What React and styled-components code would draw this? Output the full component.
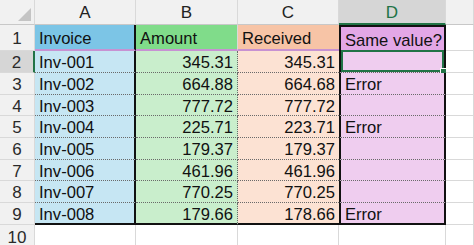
import styled, { createGlobalStyle } from "styled-components";

const GlobalStyle = createGlobalStyle`
  html, body {
    margin: 0;
    padding: 0;
    background: #ffffff;
  }
  body {
    font-family: "Liberation Sans", Arial, sans-serif;
    overflow: hidden;
  }
`;

const GRID = "#d9d9d9";
const DOT = "1px dotted #6a6a6a";
const BLACK = "2px solid #111111";
const GREEN = "#217346";

const palette = {
  A: { head: "#7cc5e6", body: "#c6e6f3" },
  B: { head: "#80dc8a", body: "#c9eecc" },
  C: { head: "#f7c4a6", body: "#fce2d3" },
  D: { head: "#e3a7e6", body: "#efcdef" },
};

const rows = [
  ["Inv-001", "345.31", "345.31", ""],
  ["Inv-002", "664.88", "664.68", "Error"],
  ["Inv-003", "777.72", "777.72", ""],
  ["Inv-004", "225.71", "223.71", "Error"],
  ["Inv-005", "179.37", "179.37", ""],
  ["Inv-006", "461.96", "461.96", ""],
  ["Inv-007", "770.25", "770.25", ""],
  ["Inv-008", "179.66", "178.66", "Error"],
];

const Sheet = styled.div`
  display: grid;
  grid-template-columns: 35px 101px 102px 101px 107px 1fr;
  grid-template-rows: 25px 26px 22px 22px 21px 22px 22px 21px 22px 22px 24px;
  width: 474px;
  height: 245px;
  overflow: hidden;
`;

const Corner = styled.div`
  position: relative;
  background: #f1f1f1;
  border-right: 1px solid ${GRID};
  border-bottom: 1px solid #c8c8c8;

  &::after {
    content: "";
    position: absolute;
    right: 3px;
    bottom: 3px;
    width: 0;
    height: 0;
    border-left: 13px solid transparent;
    border-bottom: 13px solid #c4c4c4;
  }
`;

const ColHead = styled.div`
  display: flex;
  align-items: center;
  justify-content: center;
  padding-top: 2px;
  background: ${(p) => (p.$active ? "#d6d6d6" : "#f1f1f1")};
  color: ${(p) => (p.$active ? GREEN : "#222222")};
  font-size: 17px;
  border-right: 1px solid ${GRID};
  border-bottom: ${(p) => (p.$active ? `2px solid ${GREEN}` : "1px solid #c8c8c8")};
`;

const RowHead = styled.div`
  display: flex;
  align-items: center;
  justify-content: center;
  padding-top: 3px;
  background: ${(p) => (p.$active ? "#d6d6d6" : "#f1f1f1")};
  color: #2a2a2a;
  font-size: 17px;
  border-right: ${(p) => (p.$active ? `2px solid ${GREEN}` : `1px solid ${GRID}`)};
  border-bottom: 1px solid ${GRID};
`;

const Cell = styled.div`
  position: relative;
  display: flex;
  align-items: center;
  justify-content: ${(p) => (p.$right ? "flex-end" : "flex-start")};
  padding: 3px 4px 0 4px;
  background: ${(p) => p.$bg || "#ffffff"};
  color: #111111;
  font-size: 16.6px;
  white-space: nowrap;
  border-top: ${(p) => p.$top || "none"};
  border-left: ${(p) => p.$left || "none"};
  border-right: ${(p) => p.$rightBorder || `1px solid ${GRID}`};
  border-bottom: ${(p) => p.$bottom || `1px solid ${GRID}`};
`;

const ActiveCell = styled(Cell)`
  &::before {
    content: "";
    position: absolute;
    left: 0;
    top: -1px;
    right: 0;
    bottom: 0;
    border: 2px solid ${GREEN};
    pointer-events: none;
  }
  &::after {
    content: "";
    position: absolute;
    right: -4px;
    bottom: -4px;
    width: 6px;
    height: 6px;
    background: ${GREEN};
    border: 1px solid #ffffff;
  }
`;

const DataRow = ({ n, row, last }) => {
  const bottom = last ? BLACK : DOT;
  const active = n === 2;
  const D = active ? ActiveCell : Cell;
  return (
    <>
      <RowHead $active={active}>{n}</RowHead>
      <Cell $bg={palette.A.body} $rightBorder={BLACK} $bottom={bottom}>
        {row[0]}
      </Cell>
      <Cell $bg={palette.B.body} $right $rightBorder={DOT} $bottom={bottom}>
        {row[1]}
      </Cell>
      <Cell $bg={palette.C.body} $right $rightBorder="none" $bottom={bottom}>
        {row[2]}
      </Cell>
      <D $bg={palette.D.body} $left={BLACK} $rightBorder={BLACK} $bottom={bottom}>
        {row[3]}
      </D>
      <Cell />
    </>
  );
};

export default function App() {
  const headBottom = "2px solid #c792d2";
  return (
    <>
      <GlobalStyle />
      <Sheet>
        <Corner />
        <ColHead>A</ColHead>
        <ColHead>B</ColHead>
        <ColHead>C</ColHead>
        <ColHead $active>D</ColHead>
        <ColHead />

        <RowHead>1</RowHead>
        <Cell $bg={palette.A.head} $rightBorder={BLACK} $bottom={headBottom}>
          Invoice
        </Cell>
        <Cell $bg={palette.B.head} $bottom={headBottom}>
          Amount
        </Cell>
        <Cell $bg={palette.C.head} $rightBorder="none" $bottom={headBottom}>
          Received
        </Cell>
        <Cell
          $bg={palette.D.head}
          $top={BLACK}
          $left={BLACK}
          $rightBorder={BLACK}
          $bottom="none"
        >
          Same value?
        </Cell>
        <Cell />

        {rows.map((row, i) => (
          <DataRow key={i} n={i + 2} row={row} last={i === rows.length - 1} />
        ))}

        <RowHead>10</RowHead>
        <Cell />
        <Cell />
        <Cell />
        <Cell />
        <Cell />
      </Sheet>
    </>
  );
}
